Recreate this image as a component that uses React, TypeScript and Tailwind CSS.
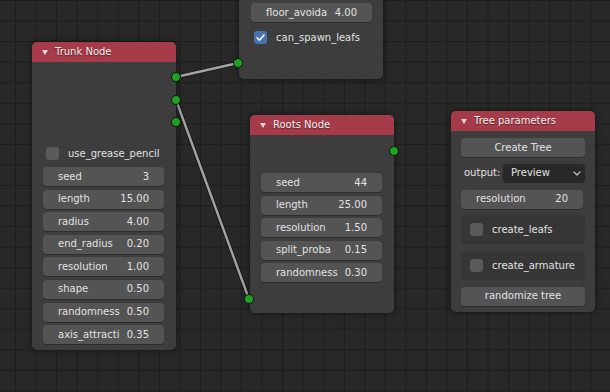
import React from "react";

function Header({ title }: { title: string }) {
  return (
    <div className="h-[20px] bg-[#a53b49] rounded-t-[5px] flex items-center pl-[10px] text-[#f0f0f0] [text-shadow:0_1px_1px_rgba(0,0,0,0.45)]">
      <svg width="6" height="5" viewBox="0 0 6 5" className="mr-[7px] shrink-0">
        <path d="M0 0H6L3 5Z" fill="#ecd3d6" />
      </svg>
      <span>{title}</span>
    </div>
  );
}

function Field({ label, value, w = "w-[121px]" }: { label: string; value: string; w?: string }) {
  return (
    <div
      className={`${w} h-[19px] rounded-[4px] bg-[#545454] shadow-[0_1px_0_rgba(0,0,0,0.25)] flex items-center justify-between px-[15px] text-[#e2e2e2] whitespace-nowrap`}
    >
      <span>{label}</span>
      <span>{value}</span>
    </div>
  );
}

function Check({ checked = false }: { checked?: boolean }) {
  return checked ? (
    <div className="w-[13px] h-[13px] rounded-[3px] bg-[#4772b3] flex items-center justify-center shrink-0">
      <svg width="11" height="11" viewBox="0 0 11 11">
        <path d="M2 5.8 L4.4 8.2 L9 3" fill="none" stroke="#ffffff" strokeWidth="1.6" strokeLinecap="round" strokeLinejoin="round" />
      </svg>
    </div>
  ) : (
    <div className="w-[13px] h-[13px] rounded-[3px] bg-[#5a5a5a] shrink-0" />
  );
}

function Socket({ className }: { className: string }) {
  return (
    <div
      className={`absolute w-[10px] h-[10px] rounded-full bg-[#1fa21f] border border-[#101010] ${className}`}
    />
  );
}

export default function App() {
  return (
    <div
      className="relative w-[610px] h-[392px] overflow-hidden bg-[#282828] text-[10px] leading-none bg-[linear-gradient(to_right,#1d1d1d_1px,transparent_1px),linear-gradient(to_bottom,#1d1d1d_1px,transparent_1px),linear-gradient(to_bottom,transparent_370px,#111111_370px,#111111_371px,transparent_371px)] bg-[size:20.55px_20.55px,20.55px_20.55px,100%_100%] bg-[position:15px_0px,15px_0px,0px_0px]"
      style={{ fontFamily: '"DejaVu Sans", "Liberation Sans", sans-serif' }}
    >
      {/* wires */}
      <svg className="absolute inset-0" width="610" height="392">
        <g strokeLinecap="round">
          <line x1="176" y1="77" x2="238" y2="63" stroke="rgba(0,0,0,0.45)" strokeWidth="4" />
          <line x1="176" y1="100" x2="249" y2="299" stroke="rgba(0,0,0,0.45)" strokeWidth="4" />
          <line x1="176" y1="77" x2="238" y2="63" stroke="#a3a3a3" strokeWidth="2.4" />
          <line x1="176" y1="100" x2="249" y2="299" stroke="#a3a3a3" strokeWidth="2.4" />
        </g>
      </svg>

      {/* Top (partial) node */}
      <div className="absolute left-[239px] top-[-20px] w-[144px] h-[99px] rounded-[5px] bg-[#3d3d3d] shadow-[0_0_6px_rgba(0,0,0,0.55)]">
        <div className="flex flex-col pt-[23px] pl-[12px]">
          <Field label="floor_avoida" value="4.00" />
          <div className="flex items-center h-[19px] mt-[6px] pl-[3px] gap-[9px] text-[#e2e2e2]">
            <Check checked />
            <span>can_spawn_leafs</span>
          </div>
        </div>
        <Socket className="left-[-6px] top-[78px]" />
      </div>

      {/* Trunk Node */}
      <div className="absolute left-[32px] top-[42px] w-[144px] h-[308px] rounded-[5px] bg-[#3d3d3d] shadow-[0_0_6px_rgba(0,0,0,0.55)]">
        <Header title="Trunk Node" />
        <div className="flex flex-col pl-[11px]">
          <div className="flex items-center h-[19px] mt-[82px] pl-[3px] gap-[9px] text-[#e2e2e2]">
            <Check />
            <span>use_grease_pencil</span>
          </div>
          <div className="flex flex-col gap-[3.6px] mt-[4px]">
            <Field label="seed" value="3" />
            <Field label="length" value="15.00" />
            <Field label="radius" value="4.00" />
            <Field label="end_radius" value="0.20" />
            <Field label="resolution" value="1.00" />
            <Field label="shape" value="0.50" />
            <Field label="randomness" value="0.50" />
            <Field label="axis_attracti" value="0.35" />
          </div>
        </div>
        <Socket className="right-[-5px] top-[30px]" />
        <Socket className="right-[-5px] top-[53px]" />
        <Socket className="right-[-5px] top-[75px]" />
      </div>

      {/* Roots Node */}
      <div className="absolute left-[250px] top-[115px] w-[144px] h-[198px] rounded-[5px] bg-[#3d3d3d] shadow-[0_0_6px_rgba(0,0,0,0.55)]">
        <Header title="Roots Node" />
        <div className="flex flex-col gap-[3.6px] pt-[38px] pl-[11px]">
          <Field label="seed" value="44" />
          <Field label="length" value="25.00" />
          <Field label="resolution" value="1.50" />
          <Field label="split_proba" value="0.15" />
          <Field label="randomness" value="0.30" />
        </div>
        <Socket className="right-[-5px] top-[31px]" />
        <Socket className="left-[-6px] top-[179px]" />
      </div>

      {/* Tree parameters */}
      <div className="absolute left-[451px] top-[111px] w-[144px] h-[201px] rounded-[5px] bg-[#3d3d3d] shadow-[0_0_6px_rgba(0,0,0,0.55)]">
        <Header title="Tree parameters" />
        <div className="flex flex-col gap-[6.8px] pt-[7px] px-[10px] text-[#e2e2e2]">
          <div className="h-[19px] rounded-[4px] bg-[#545454] shadow-[0_1px_0_rgba(0,0,0,0.25)] flex items-center justify-center">
            Create Tree
          </div>
          <div className="h-[19px] flex items-center">
            <span className="pl-[3px] w-[42px]">output:</span>
            <div className="flex-1 h-[19px] rounded-[4px] bg-[#282828] flex items-center justify-between pl-[8px] pr-[4px]">
              <span>Preview</span>
              <svg width="8" height="5" viewBox="0 0 8 5">
                <path d="M1 1 L4 4 L7 1" fill="none" stroke="#bdbdbd" strokeWidth="1.2" strokeLinecap="round" strokeLinejoin="round" />
              </svg>
            </div>
          </div>
          <Field label="resolution" value="20" w="w-[122px]" />
          <div className="h-[29px] rounded-[4px] bg-[#363636] flex items-center pl-[9px] gap-[9px]">
            <Check />
            <span>create_leafs</span>
          </div>
          <div className="h-[29px] rounded-[4px] bg-[#363636] flex items-center pl-[9px] gap-[9px]">
            <Check />
            <span>create_armature</span>
          </div>
          <div className="h-[19px] rounded-[4px] bg-[#545454] shadow-[0_1px_0_rgba(0,0,0,0.25)] flex items-center justify-center">
            randomize tree
          </div>
        </div>
      </div>
    </div>
  );
}
